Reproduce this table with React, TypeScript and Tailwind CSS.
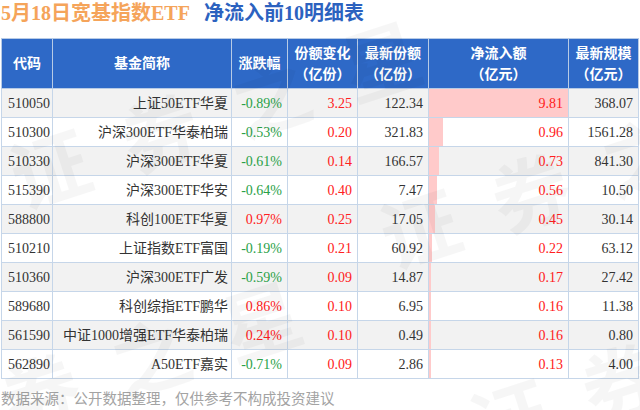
import React from 'react'

const rows = [
  { code: '510050', name: '上证50ETF华夏', chg: -0.89, share: '3.25', latest: '122.34', inflow: 9.81, scale: '368.07' },
  { code: '510300', name: '沪深300ETF华泰柏瑞', chg: -0.53, share: '0.20', latest: '321.83', inflow: 0.96, scale: '1561.28' },
  { code: '510330', name: '沪深300ETF华夏', chg: -0.61, share: '0.14', latest: '166.57', inflow: 0.73, scale: '841.30' },
  { code: '515390', name: '沪深300ETF华安', chg: -0.64, share: '0.40', latest: '7.47', inflow: 0.56, scale: '10.50' },
  { code: '588800', name: '科创100ETF华夏', chg: 0.97, share: '0.25', latest: '17.05', inflow: 0.45, scale: '30.14' },
  { code: '510210', name: '上证指数ETF富国', chg: -0.19, share: '0.21', latest: '60.92', inflow: 0.22, scale: '63.12' },
  { code: '510360', name: '沪深300ETF广发', chg: -0.59, share: '0.09', latest: '14.87', inflow: 0.17, scale: '27.42' },
  { code: '589680', name: '科创综指ETF鹏华', chg: 0.86, share: '0.10', latest: '6.95', inflow: 0.16, scale: '11.38' },
  { code: '561590', name: '中证1000增强ETF华泰柏瑞', chg: 0.24, share: '0.10', latest: '0.49', inflow: 0.16, scale: '0.80' },
  { code: '562890', name: 'A50ETF嘉实', chg: -0.71, share: '0.09', latest: '2.86', inflow: 0.13, scale: '4.00' },
]

const maxInflow = 9.81

const font = { fontFamily: '"Liberation Serif", "Noto Sans CJK SC", serif' }

function Watermark({ className }: { className: string }) {
  return (
    <span
      className={`absolute whitespace-nowrap text-[78px] font-bold leading-none tracking-[38px] text-black/[0.035] -rotate-[18deg] origin-top-left ${className}`}
      style={{ fontFamily: '"Noto Sans CJK SC", sans-serif' }}
    >
      证券之星
    </span>
  )
}

export default function App() {
  return (
    <div className="relative w-[640px] h-[410px] overflow-hidden bg-white" style={font}>
      {/* Title */}
      <div className="h-[38px] pt-[2px] pl-[1px] text-[20px] font-bold leading-[22px] whitespace-nowrap">
        <span className="text-[#f5a45a]">5月18日宽基指数ETF</span>
        <span className="ml-[14px] text-[#2c62bf]">净流入前10明细表</span>
      </div>

      {/* Table */}
      <table className="ml-[1px] w-[637px] table-fixed border-collapse text-[14px] text-[#333]">
        <colgroup>
          <col className="w-[51px]" />
          <col className="w-[179px]" />
          <col className="w-[56px]" />
          <col className="w-[70px]" />
          <col className="w-[71px]" />
          <col className="w-[140px]" />
          <col className="w-[70px]" />
        </colgroup>
        <thead>
          <tr className="h-[50px] bg-[#2e69c7] text-white font-bold leading-[21px]">
            <th className="border border-[#b7cbe6] text-center">代码</th>
            <th className="border border-[#b7cbe6] text-center">基金简称</th>
            <th className="border border-[#b7cbe6] text-center">涨跌幅</th>
            <th className="border border-[#b7cbe6] text-center">
              份额变化
              <br />
              （亿份）
            </th>
            <th className="border border-[#b7cbe6] text-center">
              最新份额
              <br />
              （亿份）
            </th>
            <th className="border border-[#b7cbe6] text-center">
              净流入额
              <br />
              （亿元）
            </th>
            <th className="border border-[#b7cbe6] text-center">
              最新规模
              <br />
              （亿元）
            </th>
          </tr>
        </thead>
        <tbody>
          {rows.map((r, i) => (
            <tr key={r.code} className={`h-[29px] ${i % 2 === 0 ? 'bg-[#f2f2f2]' : 'bg-white'}`}>
              <td className="border border-[#c6d6e9] pl-[6px] text-left">{r.code}</td>
              <td className="border border-[#c6d6e9] pr-[3px] text-right whitespace-nowrap">{r.name}</td>
              <td className={`border border-[#c6d6e9] pr-[5px] text-right ${r.chg < 0 ? 'text-[#2aa147]' : 'text-[#ff2020]'}`}>
                {r.chg.toFixed(2)}%
              </td>
              <td className="border border-[#c6d6e9] pr-[5px] text-right text-[#ff2020]">{r.share}</td>
              <td className="border border-[#c6d6e9] pr-[5px] text-right">{r.latest}</td>
              <td className="relative border border-[#c6d6e9] p-0">
                <div
                  className="absolute left-0 top-0 bottom-0 bg-[#ffcaca]"
                  style={{ width: `${(r.inflow / maxInflow) * 100}%` }}
                />
                <div className="relative pr-[5px] text-right text-[#ff2020]">{r.inflow.toFixed(2)}</div>
              </td>
              <td className="border border-[#c6d6e9] pr-[5px] text-right">{r.scale}</td>
            </tr>
          ))}
        </tbody>
      </table>

      {/* Footer */}
      <div className="pt-[9px] pl-[1px] text-[14.5px] leading-[20px] text-[#a3a3a3] whitespace-nowrap" style={{ fontFamily: '"Noto Sans CJK SC", sans-serif' }}>
        数据来源：公开数据整理，仅供参考不构成投资建议
      </div>

      {/* Watermark */}
      <div className="pointer-events-none absolute inset-0">
        <Watermark className="left-[0px] top-[140px]" />
        <Watermark className="left-[370px] top-[200px]" />
        <Watermark className="left-[-120px] top-[400px]" />
        <Watermark className="left-[460px] top-[390px]" />
      </div>
    </div>
  )
}
